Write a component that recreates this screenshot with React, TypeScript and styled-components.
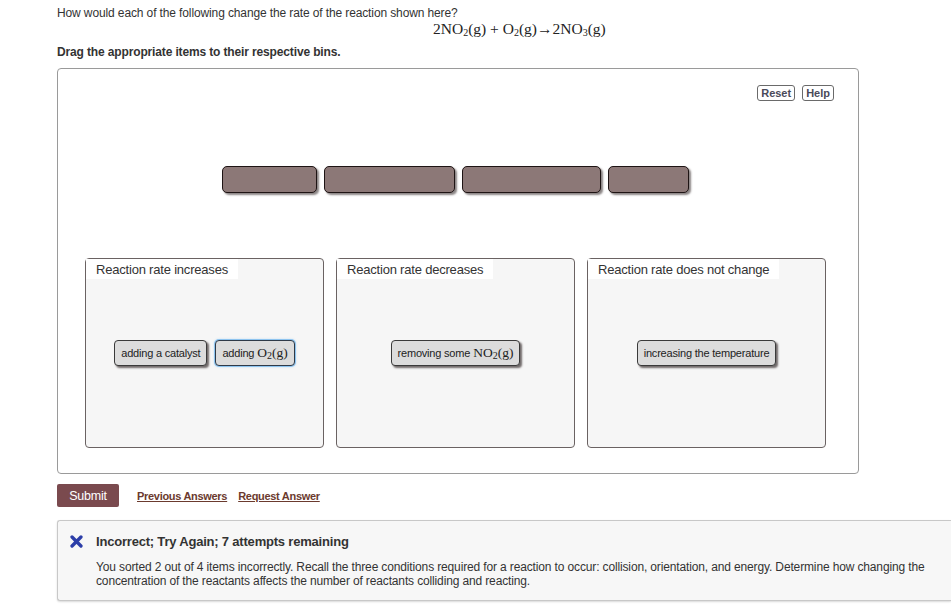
import React from "react";
import styled, { createGlobalStyle } from "styled-components";

const GlobalStyle = createGlobalStyle`
  body {
    margin: 0;
    background: #fff;
    font-family: "Liberation Sans", Arial, sans-serif;
    color: #333;
  }
`;

const Page = styled.div`
  width: 951px;
  height: 608px;
  overflow: hidden;
  padding: 6px 0 0 57px;
  box-sizing: border-box;
`;

const Question = styled.div`
  font-size: 12px;
  letter-spacing: -0.12px;
  color: #333;
  line-height: 14px;
`;

const Equation = styled.div`
  font-family: "Liberation Serif", "Times New Roman", serif;
  font-size: 15.5px;
  color: #222;
  padding-left: 376px;
  line-height: 18px;
`;

const Sub = styled.sub`
  font-size: 10px;
  vertical-align: -2px;
  line-height: 0;
`;

const Instruction = styled.div`
  margin-top: 7px;
  font-size: 12px;
  font-weight: bold;
  letter-spacing: -0.14px;
  color: #333;
`;

const Panel = styled.div`
  margin-top: 9px;
  width: 802px;
  height: 406px;
  border: 1px solid #9a9a9a;
  border-radius: 4px;
  box-sizing: border-box;
  padding-right: 5px;
  display: flex;
  flex-direction: column;
  align-items: center;
`;

const ToolRow = styled.div`
  align-self: stretch;
  display: flex;
  justify-content: flex-end;
  gap: 7px;
  padding: 16px 19px 0 0;
`;

const ToolButton = styled.button`
  font-family: "Liberation Sans", Arial, sans-serif;
  font-size: 11px;
  font-weight: bold;
  color: #4a4a5a;
  background: #fff;
  border: 1px solid #6a6a6a;
  border-radius: 3px;
  padding: 0 3px;
  height: 16px;
  line-height: 13px;
`;

const SlotRow = styled.div`
  display: flex;
  gap: 7px;
  margin-top: 65px;
`;

const Slot = styled.div<{ $w: number }>`
  width: ${(p) => p.$w}px;
  height: 27px;
  box-sizing: border-box;
  background: #8c7877;
  border: 1px solid #1e1414;
  border-radius: 5px;
  box-shadow: 2px 2px 2px rgba(60, 50, 50, 0.6);
`;

const BinRow = styled.div`
  display: flex;
  gap: 12px;
  margin-top: 65px;
`;

const Bin = styled.div`
  width: 239px;
  height: 190px;
  box-sizing: border-box;
  border: 1px solid #6a6262;
  border-radius: 4px;
  background: #f6f6f6;
  display: flex;
  flex-direction: column;
  align-items: flex-start;
`;

const BinLabel = styled.div`
  background: #fff;
  font-size: 13px;
  letter-spacing: -0.2px;
  color: #333;
  padding: 3px 10px 2px 10px;
  line-height: 15px;
`;

const BinItems = styled.div`
  align-self: stretch;
  flex: 1;
  display: flex;
  justify-content: center;
  align-items: center;
  gap: 8px;
  padding-bottom: 20px;
`;

const Item = styled.div<{ $focus?: boolean }>`
  display: flex;
  align-items: center;
  height: 26px;
  box-sizing: border-box;
  padding: 0 6px;
  background: #dcdcdc;
  border: 1px solid #3a3a3a;
  border-radius: 4px;
  font-size: 11px;
  letter-spacing: -0.2px;
  color: #222;
  white-space: nowrap;
  box-shadow: ${(p) =>
    p.$focus
      ? "0 0 0 1px #8ec4ef, 0 0 3px #8ec4ef"
      : "2px 2px 2px rgba(40, 30, 30, 0.65)"};
  border-color: ${(p) => (p.$focus ? "#2f3a48" : "#3a3a3a")};
`;

const Chem = styled.span`
  font-family: "Liberation Serif", "Times New Roman", serif;
  font-size: 13.5px;
  letter-spacing: 0;
  margin-left: 3px;
`;

const ActionRow = styled.div`
  display: flex;
  align-items: center;
  margin-top: 10px;
  height: 23px;
`;

const SubmitButton = styled.button`
  height: 23px;
  width: 62px;
  background: #7a4a4e;
  color: #fff;
  border: none;
  border-radius: 2px;
  font-family: "Liberation Sans", Arial, sans-serif;
  font-size: 12.5px;
  letter-spacing: -0.2px;
  margin-right: 18px;
`;

const TextLink = styled.a`
  font-size: 11px;
  font-weight: bold;
  letter-spacing: -0.3px;
  color: #6b3a2e;
  text-decoration: underline;
  margin-right: 11px;
`;

const Feedback = styled.div`
  margin-top: 13px;
  height: 81px;
  box-sizing: border-box;
  border: 1px solid #c8c8c8;
  border-right: none;
  border-radius: 3px 0 0 3px;
  background: #f7f7f7;
  box-shadow: 0 1px 2px rgba(0, 0, 0, 0.15);
  padding: 13px 10px 0 12px;
`;

const FeedbackTitle = styled.div`
  display: flex;
  align-items: center;
  gap: 13px;
  font-size: 13px;
  font-weight: bold;
  letter-spacing: -0.2px;
  color: #333;
`;

const FeedbackBody = styled.div`
  margin-top: 11px;
  padding-left: 26px;
  font-size: 12px;
  letter-spacing: -0.14px;
  line-height: 14px;
  color: #333;
`;

const CrossIcon = () => (
  <svg width="13" height="13" viewBox="0 0 14 14">
    <path d="M2.2 2.2 L11.8 11.8 M11.8 2.2 L2.2 11.8" stroke="#2c3ea8" strokeWidth="3.6" strokeLinecap="round" />
  </svg>
);

export default function App() {
  return (
    <Page>
      <GlobalStyle />
      <Question>How would each of the following change the rate of the reaction shown here?</Question>
      <Equation>
        2NO<Sub>2</Sub>(g) + O<Sub>2</Sub>(g)→2NO<Sub>3</Sub>(g)
      </Equation>
      <Instruction>Drag the appropriate items to their respective bins.</Instruction>
      <Panel>
        <ToolRow>
          <ToolButton>Reset</ToolButton>
          <ToolButton>Help</ToolButton>
        </ToolRow>
        <SlotRow>
          <Slot $w={95} />
          <Slot $w={131} />
          <Slot $w={139} />
          <Slot $w={81} />
        </SlotRow>
        <BinRow>
          <Bin>
            <BinLabel>Reaction rate increases</BinLabel>
            <BinItems>
              <Item>adding a catalyst</Item>
              <Item $focus>
                adding<Chem>O<Sub>2</Sub>(g)</Chem>
              </Item>
            </BinItems>
          </Bin>
          <Bin>
            <BinLabel>Reaction rate decreases</BinLabel>
            <BinItems>
              <Item>
                removing some<Chem>NO<Sub>2</Sub>(g)</Chem>
              </Item>
            </BinItems>
          </Bin>
          <Bin>
            <BinLabel>Reaction rate does not change</BinLabel>
            <BinItems>
              <Item>increasing the temperature</Item>
            </BinItems>
          </Bin>
        </BinRow>
      </Panel>
      <ActionRow>
        <SubmitButton>Submit</SubmitButton>
        <TextLink>Previous Answers</TextLink>
        <TextLink>Request Answer</TextLink>
      </ActionRow>
      <Feedback>
        <FeedbackTitle>
          <CrossIcon />
          Incorrect; Try Again; 7 attempts remaining
        </FeedbackTitle>
        <FeedbackBody>
          You sorted 2 out of 4 items incorrectly. Recall the three conditions required for a reaction to occur: collision,
          orientation, and energy. Determine how changing the concentration of the reactants affects the number of reactants
          colliding and reacting.
        </FeedbackBody>
      </Feedback>
    </Page>
  );
}
